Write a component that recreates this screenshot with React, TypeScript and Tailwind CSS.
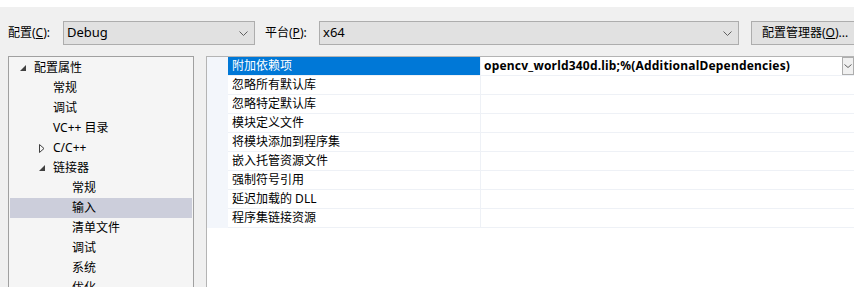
const font = '"Noto Sans", "Noto Sans CJK SC", sans-serif'

const Chevron = () => (
  <svg width="9" height="5" viewBox="0 0 9 5" className="shrink-0">
    <path d="M0.5 0.5 L4.5 4.5 L8.5 0.5" fill="none" stroke="#606060" strokeWidth="1" />
  </svg>
)

const Expanded = () => (
  <svg width="6" height="6" viewBox="0 0 6 6">
    <polygon points="6,0 6,6 0,6" fill="#404040" />
  </svg>
)

const Collapsed = () => (
  <svg width="6" height="9" viewBox="0 0 6 9">
    <polygon points="0.5,0.5 5,4.5 0.5,8.5" fill="none" stroke="#404040" strokeWidth="1" />
  </svg>
)

type TreeItem = { label: string; level: number; arrow?: 'open' | 'closed'; selected?: boolean }

const tree: TreeItem[] = [
  { label: '配置属性', level: 0, arrow: 'open' },
  { label: '常规', level: 1 },
  { label: '调试', level: 1 },
  { label: 'VC++ 目录', level: 1 },
  { label: 'C/C++', level: 1, arrow: 'closed' },
  { label: '链接器', level: 1, arrow: 'open' },
  { label: '常规', level: 2 },
  { label: '输入', level: 2, selected: true },
  { label: '清单文件', level: 2 },
  { label: '调试', level: 2 },
  { label: '系统', level: 2 },
  { label: '优化', level: 2 },
]

const props = [
  '附加依赖项',
  '忽略所有默认库',
  '忽略特定默认库',
  '模块定义文件',
  '将模块添加到程序集',
  '嵌入托管资源文件',
  '强制符号引用',
  '延迟加载的 DLL',
  '程序集链接资源',
]

export default function App() {
  return (
    <div
      className="flex h-[287px] w-[854px] flex-col overflow-hidden bg-[#f0f0f0] text-[12px] text-black"
      style={{ fontFamily: font }}
    >
      <div className="h-[7px] shrink-0 bg-white" />
      <div className="mt-[14px] flex h-[24px] shrink-0 items-center">
        <span className="ml-[8px] w-[55px] shrink-0">
          配置(<u>C</u>):
        </span>
        <div className="flex h-[24px] w-[192px] shrink-0 items-center justify-between border border-[#adadad] bg-[#e1e1e1] pl-[3px] pr-[6px] text-[13px]">
          <span>Debug</span>
          <Chevron />
        </div>
        <span className="ml-[10px] w-[54px] shrink-0">
          平台(<u>P</u>):
        </span>
        <div className="flex h-[24px] w-[420px] shrink-0 items-center justify-between border border-[#adadad] bg-[#e1e1e1] pl-[3px] pr-[6px] text-[13px]">
          <span>x64</span>
          <Chevron />
        </div>
        <div className="ml-[12px] flex h-[24px] w-[110px] shrink-0 items-center border border-[#adadad] bg-[#e1e1e1] pl-[10px]">
          <span className="whitespace-nowrap">
            配置管理器(<u>O</u>)...
          </span>
        </div>
      </div>
      <div className="mt-[11px] flex min-h-0 flex-1">
        <div className="ml-[8px] w-[186px] shrink-0 border-l border-r border-t border-[#a0a0a0] bg-[#f5f5f5] px-px pt-px">
          {tree.map((t, i) => (
            <div
              key={i}
              className={`flex h-[20px] items-center whitespace-nowrap ${t.selected ? 'bg-[#cccedb]' : ''}`}
            >
              <div
                className="flex w-[6px] shrink-0 items-center justify-center"
                style={{ marginLeft: 10 + t.level * 19 }}
              >
                {t.arrow === 'open' && <Expanded />}
                {t.arrow === 'closed' && <Collapsed />}
              </div>
              <span className="ml-[8px]">{t.label}</span>
            </div>
          ))}
        </div>
        <div className="ml-[12px] flex-1 border-l border-t border-[#b4b4b4] bg-white">
          <div className="flex">
            <div className="w-[21px] shrink-0 bg-[#f3f6fb]" />
            <div className="flex-1">
              {props.map((p, i) => {
                const sel = i === 0
                return (
                  <div key={i} className="flex h-[19px] border-b border-[#eef1f6]">
                    <div
                      className={`flex w-[252px] shrink-0 items-center pl-[4px] ${sel ? 'bg-[#0078d7] text-white' : ''}`}
                    >
                      {p}
                    </div>
                    <div className="flex flex-1 items-center border-l border-[#eef1f6] pl-[3px]">
                      {sel && (
                        <>
                          <span className="flex-1 whitespace-nowrap text-[12px] font-bold tracking-[0.2px]">
                            opencv_world340d.lib;%(AdditionalDependencies)
                          </span>
                          <div className="flex h-[18px] w-[12px] items-center justify-start border border-[#adadad] bg-[#f0f0f0] pl-[1px]">
                            <svg width="8" height="4" viewBox="0 0 8 4">
                              <path d="M0.5 0.5 L4 3.5 L7.5 0.5" fill="none" stroke="#606060" strokeWidth="1" />
                            </svg>
                          </div>
                        </>
                      )}
                    </div>
                  </div>
                )
              })}
            </div>
          </div>
        </div>
      </div>
    </div>
  )
}
